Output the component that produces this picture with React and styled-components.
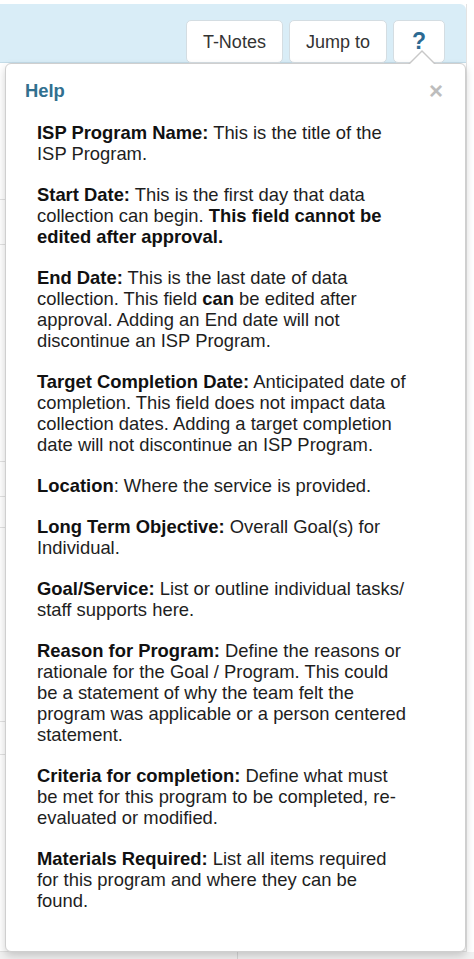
import React from "react"
import styled, { createGlobalStyle } from "styled-components"

const GlobalStyle = createGlobalStyle`
  body {
    margin: 0;
    background: #fff;
    font-family: "Liberation Sans", Arial, sans-serif;
  }
`

const Page = styled.div`
  position: relative;
  width: 474px;
  height: 959px;
  overflow: hidden;
  background: #fff;
`

const Panel = styled.div`
  width: 466px;
  margin-top: 4px;
  border-right: 1px solid #e3e3e3;
`

const Header = styled.div`
  height: 58px;
  background: #d9edf7;
  border-bottom: 1px solid #c4dce8;
  border-top-right-radius: 6px;
  display: flex;
  justify-content: flex-end;
  align-items: flex-end;
  gap: 6px;
  padding-right: 21px;
`

const ToolButton = styled.button`
  height: 43px;
  padding: 0 ${({ $icon }) => ($icon ? "18px" : "16px")};
  background: #fff;
  border: 1px solid #d4dde2;
  border-radius: 5px;
  font-family: "Liberation Sans", Arial, sans-serif;
  font-size: ${({ $icon }) => ($icon ? "23px" : "18px")};
  font-weight: ${({ $icon }) => ($icon ? 700 : 400)};
  color: ${({ $icon }) => ($icon ? "#2c6a92" : "#333")};
  line-height: 1;
  margin-bottom: -1px;
`

const Rows = styled.div`
  display: flex;
  flex-direction: column;
`

const Row = styled.div`
  height: ${({ $h }) => $h}px;
  border-bottom: 1px solid #e2e2e2;
  box-sizing: border-box;
`

const Footer = styled.div`
  height: 20px;
  background: #f1f1f1;
  display: grid;
  grid-template-columns: 238px 1fr;
  & > div:first-child {
    border-right: 1px solid #d6d6d6;
  }
`

const Popover = styled.div`
  position: absolute;
  top: 63px;
  left: 5px;
  width: 461px;
  height: 889px;
  box-sizing: border-box;
  background: #fff;
  border: 1px solid #cfcfcf;
  border-radius: 6px;
  box-shadow: 0 4px 8px rgba(0, 0, 0, 0.18);

  &::before,
  &::after {
    content: "";
    position: absolute;
    left: 402px;
    border-style: solid;
    border-color: transparent;
  }
  &::before {
    top: -14px;
    border-width: 0 14px 14px;
    border-bottom-color: #c8c8c8;
  }
  &::after {
    top: -12px;
    left: 403px;
    border-width: 0 13px 13px;
    border-bottom-color: #fff;
  }
`

const TitleBar = styled.div`
  display: flex;
  justify-content: space-between;
  align-items: center;
  padding: 16px 22px 0 19px;
  height: 21px;
  box-sizing: content-box;
`

const Title = styled.h3`
  margin: 0;
  font-size: 18.4px;
  line-height: 21px;
  font-weight: 700;
  color: #31708f;
`

const Close = styled.span`
  font-size: 24px;
  font-weight: 700;
  line-height: 21px;
  color: #bdbdbd;
`

const Body = styled.div`
  padding: 21px 55px 0 31px;
`

const Item = styled.p`
  margin: 0 0 20px;
  font-size: 18.4px;
  line-height: 21px;
  color: #1e1e1e;

  b {
    color: #111;
  }
`

const rows = [137, 45, 217, 35, 31, 194, 33, 197]

const App = () => (
  <Page>
    <GlobalStyle />
    <Panel>
      <Header>
        <ToolButton>T-Notes</ToolButton>
        <ToolButton>Jump to</ToolButton>
        <ToolButton $icon>?</ToolButton>
      </Header>
      <Rows>
        {rows.map((h, i) => (
          <Row key={i} $h={h} />
        ))}
      </Rows>
    </Panel>
    <Footer>
      <div />
      <div />
    </Footer>

    <Popover>
      <TitleBar>
        <Title>Help</Title>
        <Close>×</Close>
      </TitleBar>
      <Body>
        <Item>
          <b>ISP Program Name:</b> This is the title of the ISP Program.
        </Item>
        <Item>
          <b>Start Date:</b> This is the first day that data collection can
          begin. <b>This field cannot be edited after approval.</b>
        </Item>
        <Item>
          <b>End Date:</b> This is the last date of data collection. This field{" "}
          <b>can</b> be edited after approval. Adding an End date will not
          discontinue an ISP Program.
        </Item>
        <Item>
          <b>Target Completion Date:</b> Anticipated date of completion. This
          field does not impact data collection dates. Adding a target
          completion date will not discontinue an ISP Program.
        </Item>
        <Item>
          <b>Location</b>: Where the service is provided.
        </Item>
        <Item>
          <b>Long Term Objective:</b> Overall Goal(s) for Individual.
        </Item>
        <Item>
          <b>Goal/Service:</b> List or outline individual tasks/ staff supports
          here.
        </Item>
        <Item>
          <b>Reason for Program:</b> Define the reasons or rationale for the
          Goal / Program. This could be a statement of why the team felt the
          program was applicable or a person centered statement.
        </Item>
        <Item>
          <b>Criteria for completion:</b> Define what must be met for this
          program to be completed, re-evaluated or modified.
        </Item>
        <Item>
          <b>Materials Required:</b> List all items required for this program
          and where they can be found.
        </Item>
      </Body>
    </Popover>
  </Page>
)

export default App
